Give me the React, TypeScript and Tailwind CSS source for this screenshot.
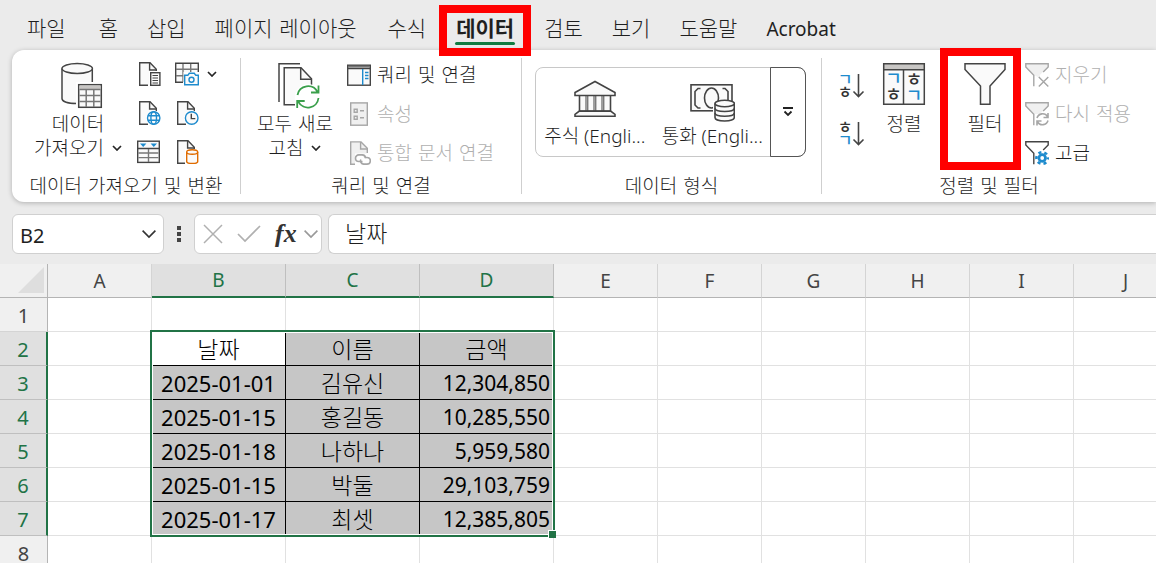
import clsx from "clsx";
import type { ReactNode } from "react";

const tabs = ["파일", "홈", "삽입", "페이지 레이아웃", "수식", "데이터", "검토", "보기", "도움말", "Acrobat"]

const columns = ["A", "B", "C", "D", "E", "F", "G", "H", "I", "J"]

const rows = [
    [],
    ["날짜", "이름", "금액"],
    ["2025-01-01", "김유신", "12,304,850"],
    ["2025-01-15", "홍길동", "10,285,550"],
    ["2025-01-18", "나하나", "5,959,580"],
    ["2025-01-15", "박둘", "29,103,759"],
    ["2025-01-17", "최셋", "12,385,805"],
    [],
]

function cellText(text: string) {
    if (/[가-힣]/.test(text)) return "text-[23px] font-light"
    return text.includes("-") ? "text-[22px]" : "text-[21px]"
}

function Chevron({ className = "w-[10px] stroke-[#262626]" }: { className?: string }) {
    return (
        <svg viewBox="0 0 10 6" fill="none" strokeWidth="1.7" className={clsx("shrink-0", className)}>
            <path d="M1 1l4 4 4-4" />
        </svg>
    )
}

/* ---------- small 24px icons ---------- */

function SmallIcon({ children }: { children: ReactNode }) {
    return (
        <svg viewBox="0 0 24 24" fill="none" stroke="#444" strokeWidth="1.4" className="h-6 w-6 shrink-0">
            {children}
        </svg>
    )
}

function Page() {
    return (
        <g>
            <path d="M11 23.3H2.7V.8H13l6.3 6.5V10" fill="#fafafa" />
            <path d="M12.6 1v7h6.6" />
        </g>
    )
}

const TextFileIcon = () => (
    <SmallIcon>
        <Page />
        <rect x="12" y="9" width="12" height="15" fill="#fff" stroke="none" />
        <rect x="13.7" y="10.7" width="9.2" height="12.6" fill="#fafafa" />
        <path d="M15.5 13.5h5.5M15.5 16h5.5M15.5 18.5h5.5M15.5 21h5.5" strokeWidth="1.1" />
    </SmallIcon>
)

const WebIcon = () => (
    <SmallIcon>
        <Page />
        <circle cx="16.7" cy="17" r="7.6" fill="#fff" stroke="none" />
        <g stroke="#1e8bcd">
            <circle cx="16.7" cy="17" r="6.2" fill="#fafafa" />
            <ellipse cx="16.7" cy="17" rx="2.8" ry="6.2" />
            <path d="M11 14.7h11.4M11 19.3h11.4" />
        </g>
    </SmallIcon>
)

const TableRangeIcon = () => (
    <SmallIcon>
        <rect x="0.7" y="1.2" width="21.6" height="21.2" fill="#fafafa" />
        <path d="M.7 8.5h21.6" />
        <path d="M1.4 13h20M1.4 17.6h20M11.5 9v13" stroke="#777" />
        <path d="M3 3.6h6.4L6.2 7zM13.6 3.6H20L16.8 7z" fill="#1e8bcd" stroke="none" />
    </SmallIcon>
)

const PictureIcon = () => (
    <SmallIcon>
        <path d="M8 20.3H.7V1.2h22.6V10" fill="#fafafa" />
        <path d="M1 7.3h22M1 13.7h8M8 2v18M15.7 2v8" stroke="#777" />
        <path d="M8.500 10H24v14H8.500z" fill="#fff" stroke="none" />
        <path d="M9.700 13.300h3.100l1.500-2h5l1.500 2h2.500v9.500H9.700z" fill="#fafafa" stroke="#1e8bcd" />
        <circle cx="16.500" cy="17.800" r="2.500" stroke="#1e8bcd" />
    </SmallIcon>
)

const RecentIcon = () => (
    <SmallIcon>
        <Page />
        <circle cx="16.7" cy="17" r="7.6" fill="#fff" stroke="none" />
        <circle cx="16.7" cy="17" r="6.3" fill="#fafafa" stroke="#1e8bcd" />
        <path d="M16.3 12.8v4.8h4" />
    </SmallIcon>
)

const ExistingIcon = () => (
    <SmallIcon>
        <Page />
        <path d="M10 9h14v15H10z" fill="#fff" stroke="none" />
        <g stroke="#e06c00">
            <path d="M11.700 12v9.500c0 1 2.300 2 5.500 2s5.500-1 5.500-2V12" fill="#fafafa" />
            <ellipse cx="17.200" cy="12" rx="5.500" ry="2.200" fill="#fafafa" />
        </g>
    </SmallIcon>
)

const QueriesIcon = () => (
    <SmallIcon>
        <rect x="0.7" y="2.2" width="22.6" height="20" fill="#fafafa" />
        <path d="M1 3.7h22" stroke="#777" />
        <path d="M1 5.5h22" />
        <path d="M15.7 6v16" stroke="#1e8bcd" />
        <path d="M18 9.5h3.5M18 12.5h3.5M18 15.5h3.5" stroke="#1e8bcd" strokeWidth="1.7" />
    </SmallIcon>
)

const PropertiesIcon = () => (
    <SmallIcon>
        <g stroke="#a6a6a6">
            <rect x="3.7" y="0.9" width="16.6" height="22.3" fill="#f0f0f0" />
            <path d="M7.2 7.2h3v3h-3zM7.2 14.2h3v3h-3zM13 8.7h4M13 15.7h4" />
        </g>
    </SmallIcon>
)

const LinksIcon = () => (
    <SmallIcon>
        <g stroke="#a6a6a6">
            <path d="M8 23.2H3.7V.9H14l6.3 6.4V12" fill="#f0f0f0" />
            <path d="M13.6 1v7h6.6" />
            <path d="M8 12.500h12l4 3V24H8z" fill="#fff" stroke="none" />
            <path d="M15.500 20.500h-3.700a3.300 3.300 0 010-6.600h3.400a3.300 3.300 0 013.200 3.300" strokeWidth="1.600" />
            <path d="M18.500 16.500h1.500a3.300 3.300 0 010 6.600h-3.400a3.300 3.300 0 01-2.800-4.600" strokeWidth="1.600" />
        </g>
    </SmallIcon>
)

function SmallFunnel({ color }: { color: string }) {
    return <path d="M8.8 23.2v-11L.8 4V.8h22.4V4l-5 5" stroke={color} />
}

const ClearIcon = () => (
    <SmallIcon>
        <path d="M.8.8h22.4V4l-8.4 8v3l-6-3L.8 4z" fill="#f0f0f0" stroke="none" />
        <SmallFunnel color="#a6a6a6" />
        <path d="M13.8 14l9.5 9.5M23.3 14l-9.5 9.5" stroke="#a6a6a6" />
    </SmallIcon>
)

const ReapplyIcon = () => (
    <SmallIcon>
        <path d="M.8.8h22.4V4l-8.4 8h-6L.8 4z" fill="#f0f0f0" stroke="none" />
        <SmallFunnel color="#a6a6a6" />
        <g stroke="#a6a6a6" strokeWidth="1.6">
            <path d="M12 16a5.8 5.8 0 0110.5-1.5M23 11v4.500h-4.500" />
            <path d="M23 18.500A5.800 5.800 0 0112.500 20M12 23.500V19h4.500" />
        </g>
    </SmallIcon>
)

const AdvancedIcon = () => (
    <SmallIcon>
        <SmallFunnel color="#444" />
        <circle cx="17.2" cy="17" r="5.8" stroke="#1e8bcd" strokeWidth="2.6" strokeDasharray="3 3.07" strokeDashoffset="1.5" />
        <circle cx="17.2" cy="17" r="3.3" fill="#fff" stroke="#1e8bcd" strokeWidth="2.8" />
    </SmallIcon>
)

/* ---------- large icons ---------- */

const DatabaseIcon = () => (
    <svg viewBox="-8 0 52 48" fill="none" stroke="#444" strokeWidth="1.5" className="h-12 w-[52px]">
        <path d="M2 6.5v30c0 3 6.5 5 15.5 5h15V6.5" fill="#fafafa" stroke="none" />
        <path d="M2 6.5v30c0 3 6 5 15 5M32.3 6.5V20" />
        <ellipse cx="17.2" cy="6.5" rx="15.2" ry="5" fill="#fafafa" />
        <path d="M16 20h28v28H16z" fill="#fff" stroke="none" />
        <rect x="18.7" y="22.7" width="22.6" height="22.6" fill="#fafafa" />
        <path d="M19.500 23.500h21v3.500h-21z" fill="#c8c6c4" stroke="none" />
        <path d="M19.500 27.500h21M19.500 33.500h21M19.500 39.500h21M26.200 27.500V45M33.800 27.500V45" stroke="#777" />
    </svg>
)

const RefreshAllIcon = () => (
    <svg viewBox="-8 0 52 48" fill="none" stroke="#444" strokeWidth="1.5" className="h-12 w-[52px]">
        <path d="M2 40V1.700h21" />
        <path d="M18 42.700H7.200V5.700H24l10.500 11V24" fill="#fafafa" />
        <path d="M23.700 6v11.200h10.800" />
        <circle cx="31" cy="35" r="13" fill="#fff" stroke="none" />
        <g stroke="#3a9f4b" strokeWidth="1.800">
            <path d="M20.500 33a10.700 10.700 0 0120-3M41.500 23.500v7h-7.500" />
            <path d="M41.500 36a10.700 10.700 0 01-20 4M20.200 46v-7h7.500" />
        </g>
    </svg>
)

const BankIcon = () => (
    <svg viewBox="0 0 46 42" fill="none" stroke="#444" strokeWidth="1.6" className="h-[42px] w-[46px]">
        <path d="M3 12.5L23 1.500l20 11v3H3zM7.500 15.500h31V31h-31z" fill="#fafafa" />
        <path d="M14 16v15M15.800 16v15M22 16v15M23.800 16v15M30 16v15M31.800 16v15" strokeWidth="1" />
        <path d="M7 31.300h32l4 3.200v1.700H3v-1.700z" fill="#fafafa" />
    </svg>
)

const MoneyIcon = () => (
    <svg viewBox="0 0 46 42" fill="none" stroke="#444" strokeWidth="1.6" className="h-[42px] w-[46px]">
        <rect x="2" y="4.800" width="41" height="26" fill="#fafafa" />
        <path d="M11.500 8.500H9l-3 3V25l3 3h2.500M33.500 8.500H36l3 3V21" />
        <ellipse cx="22.500" cy="18" rx="7" ry="10" />
        <path d="M24 21h22v21H24z" fill="#fff" stroke="none" />
        <path d="M26 23.500v14c0 2 4 3.500 9.700 3.500s9.600-1.500 9.600-3.500v-14" fill="#fafafa" />
        <ellipse cx="35.700" cy="23.500" rx="9.700" ry="3.200" fill="#fafafa" />
        <path d="M26 28.300c0 2 4 3.200 9.700 3.200s9.600-1.200 9.600-3.200M26 33c0 2 4 3.200 9.700 3.200s9.600-1.200 9.600-3.200" />
    </svg>
)

function SortIcon({ top, bottom, descending }: { top: string, bottom: string, descending?: boolean }) {
    return (
        <svg viewBox="0 0 26 24" className="h-6 w-[26px] overflow-visible font-medium [font-family:'Noto_Sans_CJK_KR',sans-serif]">
            <text x="6" y="11" fontSize="16" textAnchor="middle" fill={descending ? "#333" : "#1e8bcd"}>{top}</text>
            <text x="6" y="24" fontSize="16" textAnchor="middle" fill={descending ? "#1e8bcd" : "#333"}>{bottom}</text>
            <path d="M19.500 0v22M14.500 17.500l5 5 5-5" fill="none" stroke="#444" strokeWidth="1.600" />
        </svg>
    )
}

const SortDialogIcon = () => (
    <svg viewBox="0 0 44 48" className="h-12 w-11 font-medium [font-family:'Noto_Sans_CJK_KR',sans-serif]">
        <rect x="1.700" y="1.700" width="40.600" height="40.600" fill="#fafafa" />
        <path d="M1.700 1.700h40.600v6H1.700z" fill="#c8c6c4" />
        <path d="M1.700 1.700h40.600v40.600H1.700zM2 7.700h40M21.500 8v34" fill="none" stroke="#444" strokeWidth="1.500" />
        <g fontSize="18" textAnchor="middle">
            <text x="11.500" y="23" fill="#1e8bcd">ㄱ</text>
            <text x="11.500" y="39" fill="#333">ㅎ</text>
            <text x="32" y="24" fill="#333">ㅎ</text>
            <text x="32" y="40" fill="#1e8bcd">ㄱ</text>
        </g>
    </svg>
)

const FilterIcon = () => (
    <svg viewBox="0 0 44 48" fill="#fafafa" stroke="#444" strokeWidth="1.5" className="h-12 w-11">
        <path d="M2 1.8h40v5.7L27 24v18.200h-9.500V24L2 7.500z" />
    </svg>
)

/* ---------- ribbon ---------- */

function Group({ label, className, children }: { label: string, className: string, children: ReactNode }) {
    return (
        <section className={clsx("flex shrink-0 flex-col justify-between pt-3 pb-1", className)}>
            <div className="flex items-start">{children}</div>
            <h2 className="text-center leading-6">{label}</h2>
        </section>
    )
}

const Divider = () => <div className="mt-2 mb-2 w-px shrink-0 bg-[#cfcfcf]" />

function BigButton({ icon, className, children }: { icon: ReactNode, className: string, children: ReactNode }) {
    return (
        <button className={clsx("flex shrink-0 flex-col items-center gap-0.5 leading-6", className)}>
            {icon}
            <span className="flex flex-col items-center">{children}</span>
        </button>
    )
}

function RowButton({ icon, disabled, children }: { icon: ReactNode, disabled?: boolean, children: ReactNode }) {
    return (
        <button disabled={disabled} className="flex h-6 items-center gap-1.5 leading-6 whitespace-nowrap disabled:text-[#b0b0b0]">
            {icon}
            {children}
        </button>
    )
}

function Ribbon() {
    return (
        <div className="ml-3 flex h-[152px] overflow-hidden rounded-l-xl bg-white text-[19px] shadow-[0_1px_5px_rgba(0,0,0,0.25)]">
            <Group label="데이터 가져오기 및 변환" className="w-[228px]">
                <BigButton icon={<DatabaseIcon />} className="ml-4 w-[100px]">
                    <span>데이터</span>
                    <span className="flex items-center gap-2">가져오기 <Chevron /></span>
                </BigButton>
                <div className="ml-[9px] grid grid-cols-[24px_24px_10px] items-center gap-x-[14px] gap-y-[15px]">
                    <button aria-label="텍스트"><TextFileIcon /></button>
                    <button aria-label="그림"><PictureIcon /></button>
                    <button aria-label="그림 옵션" className="-ml-1.5"><Chevron /></button>
                    <button aria-label="웹"><WebIcon /></button>
                    <button aria-label="최근 원본" className="col-span-2"><RecentIcon /></button>
                    <button aria-label="테이블"><TableRangeIcon /></button>
                    <button aria-label="기존 연결" className="col-span-2"><ExistingIcon /></button>
                </div>
            </Group>
            <Divider />
            <Group label="쿼리 및 연결" className="w-[280px]">
                <BigButton icon={<RefreshAllIcon />} className="ml-2 w-[92px]">
                    <span>모두 새로</span>
                    <span className="flex items-center gap-2">고침 <Chevron /></span>
                </BigButton>
                <div className="mt-px ml-1.5 flex flex-col gap-[15px]">
                    <RowButton icon={<QueriesIcon />}>쿼리 및 연결</RowButton>
                    <RowButton icon={<PropertiesIcon />} disabled>속성</RowButton>
                    <RowButton icon={<LinksIcon />} disabled>통합 문서 연결</RowButton>
                </div>
            </Group>
            <Divider />
            <Group label="데이터 형식" className="w-[299px]">
                <div className="mt-[5px] ml-[13px] flex h-[90px] w-[271px] rounded-lg border border-[#c8c8c8] [font-family:'Noto_Sans','Noto_Sans_CJK_KR',sans-serif]">
                    <button className="flex flex-1 flex-col items-center gap-0.5 pt-3 leading-6 whitespace-nowrap">
                        <BankIcon />
                        주식 (Engli...
                    </button>
                    <button className="flex flex-1 flex-col items-center gap-0.5 pt-3 leading-6 whitespace-nowrap">
                        <MoneyIcon />
                        통화 (Engli...
                    </button>
                    <button aria-label="데이터 형식 더 보기" className="-m-px flex w-9 items-center justify-center rounded-r-lg border border-[#555]">
                        <svg viewBox="0 0 12 10" fill="none" stroke="#222" strokeWidth="1.8" className="w-3">
                            <path d="M1 1h10M2.5 4.5L6 8l3.5-3.5" />
                        </svg>
                    </button>
                </div>
            </Group>
            <Divider />
            <Group label="정렬 및 필터" className="w-[334px]">
                <div className="mt-3 ml-[17px] flex flex-col gap-6">
                    <button aria-label="오름차순"><SortIcon top="ㄱ" bottom="ㅎ" /></button>
                    <button aria-label="내림차순"><SortIcon top="ㅎ" bottom="ㄱ" descending /></button>
                </div>
                <BigButton icon={<SortDialogIcon />} className="ml-[17px] w-11">정렬</BigButton>
                <BigButton icon={<FilterIcon />} className="ml-[37px] w-11">필터</BigButton>
                <div className="mt-px ml-[18px] flex flex-col gap-[15px]">
                    <RowButton icon={<ClearIcon />} disabled>지우기</RowButton>
                    <RowButton icon={<ReapplyIcon />} disabled>다시 적용</RowButton>
                    <RowButton icon={<AdvancedIcon />}>고급</RowButton>
                </div>
            </Group>
        </div>
    )
}

function FormulaBar() {
    return (
        <div className="flex h-[62px] shrink-0 items-center pt-0.5 pl-3 [font-family:'Noto_Sans','Noto_Sans_CJK_KR',sans-serif]">
            <div className="flex h-10 w-[152px] items-center rounded-md border border-[#d0d0d0] bg-white pr-1.5 pl-[7px]">
                <input aria-label="이름 상자" defaultValue="B2" className="w-full min-w-0 pt-1 text-xl outline-none" />
                <Chevron className="w-4 stroke-[#333] [stroke-width:1]" />
            </div>
            <svg viewBox="0 0 4 16" fill="#444" className="mx-[13px] h-4 w-1 shrink-0">
                <path d="M0 0h4v4H0zM0 6h4v4H0zM0 12h4v4H0z" />
            </svg>
            <div className="flex h-10 w-32 shrink-0 items-center rounded-md border border-[#d0d0d0] bg-white pl-2">
                <button aria-label="취소">
                    <svg viewBox="0 0 20 20" stroke="#b0b0b0" strokeWidth="1.5" className="w-5">
                        <path d="M1 1l18 18M19 1L1 19" />
                    </svg>
                </button>
                <button aria-label="입력" className="ml-3.5">
                    <svg viewBox="0 0 24 18" fill="none" stroke="#b0b0b0" strokeWidth="1.7" className="w-6">
                        <path d="M1 9l7 7L23 1" />
                    </svg>
                </button>
                <button className="ml-3.5 text-[26px] leading-8 font-bold text-[#333] italic [font-family:'Liberation_Serif',serif]">fx</button>
                <Chevron className="ml-1.5 w-4 stroke-[#999] [stroke-width:1]" />
            </div>
            <input
                aria-label="수식 입력줄"
                defaultValue="날짜"
                className="ml-1.5 h-10 min-w-0 flex-1 rounded-l-md border border-r-0 border-[#d0d0d0] bg-white pb-1 pl-4 text-[23px] font-light outline-none"
            />
        </div>
    )
}

function Sheet() {
    return (
        <div className="min-h-0 flex-1 overflow-hidden bg-white">
            <table className="w-full min-w-[1178px] table-fixed border-separate border-spacing-0 [font-family:'Noto_Sans','Noto_Sans_CJK_KR',sans-serif]">
                <colgroup>
                    <col className="w-12" />
                    {columns.map(name => (
                        <col key={name} className={"BCD".includes(name) ? "w-[134px]" : "w-[104px]"} />
                    ))}
                    <col />
                </colgroup>
                <thead>
                    <tr className="h-[34px] bg-[#f0f0f0] text-[19px] leading-6 text-[#444]">
                        <td className="border-r border-b border-[#b4b4b4] p-0 pr-[3px] pb-px">
                            <svg viewBox="0 0 26 26" className="ml-auto w-[26px]"><path d="M26 0v26H0z" fill="#dedede" /></svg>
                        </td>
                        {columns.map(name => (
                            <th
                                key={name}
                                className={clsx(
                                    "border-r p-0 font-normal",
                                    "BCD".includes(name)
                                        ? "border-r-[#bfbfbf] border-b-2 border-b-[#217346] bg-[#e0e0e0] text-[#217346]"
                                        : "border-b border-r-[#d4d4d4] border-b-[#b4b4b4]"
                                )}
                            >
                                {name}
                            </th>
                        ))}
                        <td className="border-b border-[#b4b4b4] p-0" />
                    </tr>
                </thead>
                <tbody>
                    {rows.map((row, r) => {
                        const selected = row.length > 0
                        return (
                            <tr key={r} className="h-[34px]">
                                <th
                                    className={clsx(
                                        "border-b p-0 pt-0.5 text-xl leading-6 font-normal",
                                        selected
                                            ? "border-r-2 border-r-[#217346] border-b-[#bfbfbf] bg-[#e0e0e0] text-[#217346]"
                                            : "border-r border-r-[#b4b4b4] border-b-[#d4d4d4] bg-[#f0f0f0] text-[#444]"
                                    )}
                                >
                                    {r + 1}
                                </th>
                                {columns.map((name, c) => {
                                    const text = row[c - 1]
                                    if (text === undefined) {
                                        return <td key={name} className="border-r border-b border-[#e1e1e1] p-0" />
                                    }
                                    const active = r === 1 && c === 1
                                    return (
                                        <td
                                            key={name}
                                            className={clsx(
                                                "border-r border-b border-black p-0 leading-8 text-black",
                                                active ? "relative bg-white" : "bg-[#c6c6c6]",
                                                cellText(text),
                                                name === "D" && r > 1 ? "pr-[3px] text-right" : "text-center"
                                            )}
                                        >
                                            {text}
                                            {active && (
                                                <div className="pointer-events-none absolute -top-0.5 -left-0.5 z-10 h-[207px] w-[405px] border-2 border-[#217346]">
                                                    <div className="h-full border border-white" />
                                                    <div className="absolute -right-[3px] -bottom-[3px] h-2 w-2 border-t border-l border-white bg-[#217346]" />
                                                </div>
                                            )}
                                        </td>
                                    )
                                })}
                                <td className="border-b border-[#e1e1e1] p-0" />
                            </tr>
                        )
                    })}
                </tbody>
            </table>
        </div>
    )
}

export default function App() {
    return (
        <div className="flex h-screen flex-col overflow-hidden bg-[#ebebeb] text-[#1f1f1f] [font-family:'DejaVu_Sans','Noto_Sans_CJK_KR',sans-serif]">
            <header className="relative shrink-0 font-light">
                <nav className="flex h-[50px] items-center gap-[29px] pt-2 pl-[27px] text-[21px] leading-8 whitespace-nowrap">
                    {tabs.map(tab => (
                        <button
                            key={tab}
                            className={clsx(
                                "relative",
                                tab === "파일" && "mr-1",
                                tab === "페이지 레이아웃" && "mr-0.5",
                                tab === "데이터" && "px-px font-bold",
                                tab === "Acrobat" && "text-[19px] font-normal [font-family:'Noto_Sans',sans-serif]"
                            )}
                        >
                            {tab}
                            {tab === "데이터" && (
                                <>
                                    <span className="absolute inset-x-0 bottom-0 h-[3px] rounded-full bg-[#107c41]" />
                                    <span className="absolute -inset-x-4 -top-2 z-20 h-[51px] border-8 border-[#ff0000]" />
                                </>
                            )}
                        </button>
                    ))}
                </nav>
                <Ribbon />
                <div className="pointer-events-none absolute top-12 left-[940px] z-20 h-[122px] w-[81px] border-8 border-[#ff0000]" />
            </header>
            <FormulaBar />
            <Sheet />
        </div>
    )
}
